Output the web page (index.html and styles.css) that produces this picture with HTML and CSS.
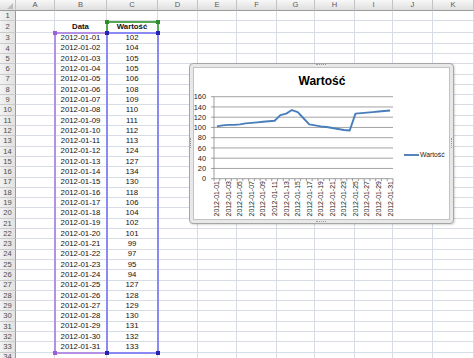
FILE: index.html
```html
<!DOCTYPE html>
<html lang="pl">
    <head>
        <meta charset="UTF-8" />
        <meta name="viewport" content="width=device-width, initial-scale=1.0" />
        <title>Wartość</title>
        <link rel="stylesheet" href="styles.css">
    </head>
    <body>
        <div class="sheet">
            <div class="grid"></div>

            <!-- zaznaczenie zakresów serii -->
            <div class="sel sel-name"></div>
            <div class="sel sel-cat"></div>
            <div class="sel sel-val"></div>
            <span class="dot dot-green g1"></span>
            <span class="dot dot-green g2"></span>
            <span class="dot dot-purple p1"></span>
            <span class="dot dot-purple p2"></span>
            <span class="dot dot-blue b1"></span>
            <span class="dot dot-blue b2"></span>
            <span class="dot dot-blue b3"></span>
            <span class="dot dot-blue b4"></span>

            <div class="chart">
                <div class="chart-area">
                    <svg class="plot" width="255" height="151" viewBox="0 0 255 151"></svg>
                </div>
                <span class="grip grip-top"></span>
                <span class="grip grip-bottom"></span>
                <span class="grip grip-left"></span>
                <span class="grip grip-right"></span>
            </div>
        </div>

        <script>
            const cols = ["A", "B", "C", "D", "E", "F", "G", "H", "I", "J", "K"];
            const values = [102, 104, 105, 105, 106, 108, 109, 110, 111, 112, 113, 124, 127, 134, 130, 118,
                106, 104, 102, 101, 99, 97, 95, 94, 127, 128, 129, 130, 131, 132, 133];

            const grid = document.querySelector(".grid");

            function cell(cls, text) {
                const el = document.createElement("div");
                el.className = cls;
                el.textContent = text;
                grid.appendChild(el);
            }

            function dateOf(i) {
                return "2012-01-" + String(i + 1).padStart(2, "0");
            }

            // nagłówki kolumn
            cell("corner", "");
            cols.forEach(c => cell("col-head", c));

            // wiersze 1..34
            for (let r = 1; r <= 34; r++) {
                cell("row-head", r);
                cols.forEach(c => {
                    let text = "";
                    let cls = "cell";
                    if (r === 2 && c === "B") { text = "Data"; cls += " bold"; }
                    if (r === 2 && c === "C") { text = "Wartość"; cls += " bold"; }
                    if (r >= 3 && r <= 33 && c === "B") text = dateOf(r - 3);
                    if (r >= 3 && r <= 33 && c === "C") text = values[r - 3];
                    cell(cls, text);
                });
            }

            // wykres liniowy
            const svg = document.querySelector(".plot");
            const NS = "http://www.w3.org/2000/svg";
            const plotL = 20, plotR = 199, plotT = 28.7, plotB = 110.7;
            const step = (plotR - plotL) / values.length;
            const yOf = v => plotB - v * (plotB - plotT) / 160;
            const xOf = i => plotL + (i + 0.5) * step;

            function add(tag, attrs, text) {
                const el = document.createElementNS(NS, tag);
                for (const k in attrs) el.setAttribute(k, attrs[k]);
                if (text !== undefined) el.textContent = text;
                svg.appendChild(el);
                return el;
            }

            add("text", { x: 128, y: 16.5, class: "title", "text-anchor": "middle" }, "Wartość");

            for (let v = 0; v <= 160; v += 20) {
                const y = yOf(v);
                if (v > 0) add("line", { x1: plotL, x2: plotR, y1: y, y2: y, class: "gridline" });
                add("line", { x1: plotL - 3, x2: plotL, y1: y, y2: y, class: "axis" });
                add("text", { x: 12, y: y + 2.6, class: "ylab", "text-anchor": "end" }, v);
            }

            add("line", { x1: plotL, x2: plotL, y1: plotT, y2: plotB, class: "axis" });
            add("line", { x1: plotL, x2: plotR, y1: plotB, y2: plotB, class: "axis" });

            for (let i = 0; i <= values.length; i++) {
                const x = plotL + i * step;
                add("line", { x1: x, x2: x, y1: plotB, y2: plotB + 2.5, class: "axis" });
            }

            for (let i = 0; i < values.length; i += 2) {
                const x = xOf(i) + 2.4;
                add("text", {
                    class: "xlab",
                    "text-anchor": "end",
                    transform: `translate(${x.toFixed(2)},${plotB + 2.5}) rotate(-90)`
                }, dateOf(i));
            }

            const pts = values.map((v, i) => xOf(i).toFixed(2) + "," + yOf(v).toFixed(2)).join(" ");
            add("polyline", { points: pts, class: "series" });

            // legenda
            add("line", { x1: 210, x2: 225, y1: 87, y2: 87, class: "series" });
            add("text", { x: 226, y: 89.4, class: "legend" }, "Wartość");
        </script>
    </body>
</html>
```

FILE: styles.css
```css
html,
body {
    margin: 0;
    height: 100%;
    overflow: hidden;
    background-color: #fff;
}

.sheet {
    position: relative;
    font-family: "Liberation Sans", Arial, sans-serif;
}

.grid {
    display: grid;
    grid-template-columns: 16px 39px 52px 51px 40px 39px 40px 38px 40px 38px 40px 41px;
    grid-template-rows: 11px 10.4px 12px;
    grid-auto-rows: 10.3px;
}

.grid > div {
    box-sizing: border-box;
    display: flex;
    align-items: center;
    justify-content: center;
    white-space: nowrap;
    overflow: hidden;
    line-height: 1;
}

.cell {
    font-size: 7.8px;
    color: #111;
    border-right: 1px solid #d7dce5;
    border-bottom: 1px solid #d7dce5;
}

.bold {
    font-weight: bold;
}

.corner,
.col-head {
    background: linear-gradient(#f8f8f8, #dedede);
    border-right: 1px solid #c3c3c3;
    border-bottom: 1px solid #9c9c9c;
    font-size: 7.6px;
    color: #5a5a5a;
}

.corner {
    position: relative;
}

.corner::after {
    content: "";
    position: absolute;
    right: 2px;
    bottom: 1px;
    border-left: 6px solid transparent;
    border-bottom: 6px solid #bdbdbd;
}

.row-head {
    background: linear-gradient(to right, #f2f2f2, #e2e2e2);
    border-right: 1px solid #9c9c9c;
    border-bottom: 1px solid #cbcbcb;
    font-size: 7.6px;
    color: #4e4e4e;
}

/* zakresy danych wykresu */
.sel {
    position: absolute;
    box-sizing: border-box;
}

.sel-name {
    left: 106px;
    top: 21px;
    width: 53px;
    height: 13px;
    border: 2px solid #54a854;
    border-bottom: none;
}

.sel-cat {
    left: 54px;
    top: 32px;
    width: 54px;
    height: 322px;
    border: 2px solid #b391e4;
}

.sel-val {
    left: 106px;
    top: 32px;
    width: 53px;
    height: 322px;
    border: 2px solid #8a8af2;
}

.dot {
    position: absolute;
    width: 4px;
    height: 4px;
}

.dot-green { background-color: #2d8a2d; }
.dot-purple { background-color: #9a5fd6; }
.dot-blue { background-color: #2424b4; }

.g1 { left: 105px; top: 20px; }
.g2 { left: 156px; top: 20px; }
.p1 { left: 53px; top: 31px; }
.p2 { left: 53px; top: 351px; }
.b1 { left: 105px; top: 31px; }
.b2 { left: 156px; top: 31px; }
.b3 { left: 105px; top: 351px; }
.b4 { left: 156px; top: 351px; }

/* wykres */
.chart {
    position: absolute;
    left: 189px;
    top: 63px;
    width: 265px;
    height: 161px;
    box-sizing: border-box;
    padding: 3px;
    border: 1px solid #a6a6a6;
    border-radius: 4px;
    background-color: #e8e8e8;
    box-shadow: 1px 1px 2px rgba(0, 0, 0, 0.15);
}

.chart-area {
    box-sizing: border-box;
    height: 100%;
    border: 1px solid #c2c2c2;
    background-color: #fff;
}

.plot {
    display: block;
    font-family: "Liberation Sans", Arial, sans-serif;
}

.title {
    font-size: 12px;
    font-weight: bold;
    fill: #000;
}

.gridline {
    stroke: #8c8c8c;
    stroke-width: 0.8;
}

.axis {
    stroke: #868686;
    stroke-width: 0.8;
}

.ylab,
.xlab {
    fill: #222;
}

.ylab {
    font-size: 7.4px;
}

.xlab {
    font-size: 6.9px;
}

.legend {
    font-size: 6.8px;
    fill: #222;
}

.series {
    fill: none;
    stroke: #4a7ebb;
    stroke-width: 1.9;
    stroke-linejoin: round;
}

.grip {
    position: absolute;
    border-color: #9a9a9a;
    border-style: dotted;
    border-width: 0;
}

.grip-top,
.grip-bottom {
    left: 126px;
    width: 10px;
    height: 1px;
    border-top-width: 1px;
}

.grip-top { top: 0; }
.grip-bottom { bottom: 0; }

.grip-left,
.grip-right {
    top: 74px;
    width: 1px;
    height: 10px;
    border-left-width: 1px;
}

.grip-left { left: 0; }
.grip-right { right: 0; }
```
